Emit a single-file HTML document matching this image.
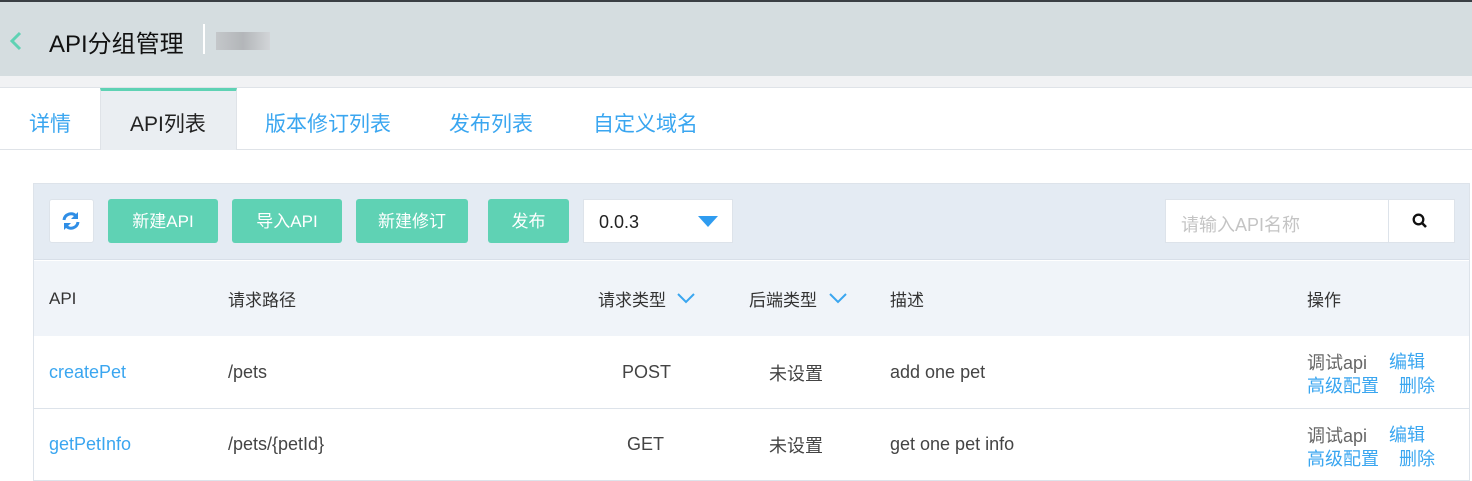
<!DOCTYPE html><html><head><meta charset="utf-8"><style>
*{margin:0;padding:0;box-sizing:border-box}
body{width:1472px;height:481px;overflow:hidden;background:#fff;font-family:"Liberation Sans","Noto Sans CJK SC",sans-serif;position:relative;color:#333}
.a{position:absolute}
.btn{position:absolute;top:199px;height:44px;background:#5fd2b4;color:#fff;border-radius:3px;font-size:17px;text-align:center;line-height:46px}
.th{position:absolute;top:288px;font-size:17px;color:#333}
.td{position:absolute;font-size:18px;color:#444}
.blue,.td.blue{color:#3aa6f0}
.g{color:#666!important}
</style></head><body>
<div class="a" style="left:0;top:0;width:1472px;height:2px;background:#3a3f44"></div>
<div class="a" style="left:0;top:2px;width:1472px;height:74px;background:#d5dde0"></div>
<svg class="a" style="left:9px;top:31px" width="14" height="20"><path d="M11 2 L3 10 L11 18" stroke="#5fd2b4" stroke-width="3" fill="none"/></svg>
<div class="a" style="left:49px;top:24px;font-size:24px;color:#111">API分组管理</div>
<div class="a" style="left:203px;top:24px;width:2px;height:30px;background:#fff"></div>
<div class="a" style="left:216px;top:32px;width:54px;height:18px;background:linear-gradient(90deg,#c4c7ca 0,#b3b6b9 50%,#d2d5d8 100%)"></div>
<div class="a" style="left:0;top:76px;width:1472px;height:11px;background:#f1f2f4"></div>
<div class="a" style="left:0;top:87px;width:1472px;height:1px;background:#dfe3e8"></div>
<div class="a" style="left:0;top:149px;width:1472px;height:1px;background:#dfe3e8"></div>
<div class="a" style="left:100px;top:88px;width:137px;height:62px;background:#eaeef2;border-top:3px solid #5fd2b4;border-left:1px solid #dfe3e8;border-right:1px solid #dfe3e8"></div>
<div class="a blue" style="left:29px;top:108px;font-size:21px">详情</div>
<div class="a" style="left:130px;top:108px;font-size:21px;color:#222">API列表</div>
<div class="a blue" style="left:265px;top:108px;font-size:21px">版本修订列表</div>
<div class="a blue" style="left:449px;top:108px;font-size:21px">发布列表</div>
<div class="a blue" style="left:593px;top:108px;font-size:21px">自定义域名</div>
<div class="a" style="left:33px;top:183px;width:1437px;height:298px;border:1px solid #dde3ea;background:#fff"></div>
<div class="a" style="left:34px;top:184px;width:1435px;height:76px;background:#e4ebf3;border-bottom:1px solid #d8dfe8"></div>
<div class="a" style="left:34px;top:261px;width:1435px;height:75px;background:#f0f4f9"></div>
<div class="a" style="left:34px;top:408px;width:1435px;height:1px;background:#dde3ea"></div>
<div class="a" style="left:49px;top:199px;width:45px;height:44px;background:#fff;border:1px solid #dde3ea;border-radius:3px"></div>
<svg class="a" style="left:61px;top:211px" width="20" height="20" viewBox="0 0 20 20"><path d="M3 9 A7 7 0 0 1 15 5" stroke="#2f8ee6" stroke-width="3" fill="none"/><path d="M17 1 L17 8 L10 8Z" fill="#2f8ee6"/><path d="M17 11 A7 7 0 0 1 5 15" stroke="#2f8ee6" stroke-width="3" fill="none"/><path d="M3 19 L3 12 L10 12Z" fill="#2f8ee6"/></svg>
<div class="btn" style="left:108px;width:110px">新建API</div>
<div class="btn" style="left:232px;width:110px">导入API</div>
<div class="btn" style="left:356px;width:112px">新建修订</div>
<div class="btn" style="left:488px;width:81px">发布</div>
<div class="a" style="left:583px;top:199px;width:150px;height:44px;background:#fff;border:1px solid #dde3ea"></div>
<div class="a" style="left:599px;top:212px;font-size:18px;color:#222">0.0.3</div>
<svg class="a" style="left:698px;top:216px" width="20" height="12"><path d="M0 0 L20 0 L10 11Z" fill="#2f9cf0"/></svg>
<div class="a" style="left:1165px;top:199px;width:290px;height:44px;background:#fff;border:1px solid #dde3ea"></div>
<div class="a" style="left:1388px;top:199px;width:1px;height:44px;background:#dde3ea"></div>
<div class="a" style="left:1181px;top:211px;font-size:18px;color:#c4c4c4">请输入API名称</div>
<svg class="a" style="left:1412px;top:213px" width="16" height="16"><circle cx="6.5" cy="6.5" r="4.8" stroke="#111" stroke-width="2.3" fill="none"/><path d="M10 10 L14 14" stroke="#111" stroke-width="2.6"/></svg>
<div class="th" style="left:49px;top:289px">API</div>
<div class="th" style="left:228px;top:286px">请求路径</div>
<div class="th" style="left:598px;top:286px">请求类型</div>
<svg class="a" style="left:677px;top:293px" width="18" height="11"><path d="M1 1 L9 9 L17 1" stroke="#3aa6f0" stroke-width="2" fill="none"/></svg>
<div class="th" style="left:749px;top:286px">后端类型</div>
<svg class="a" style="left:829px;top:293px" width="18" height="11"><path d="M1 1 L9 9 L17 1" stroke="#3aa6f0" stroke-width="2" fill="none"/></svg>
<div class="th" style="left:890px;top:286px">描述</div>
<div class="th" style="left:1307px;top:286px">操作</div>
<div class="td blue" style="left:49px;top:362px">createPet</div>
<div class="td" style="left:228px;top:362px">/pets</div>
<div class="td" style="left:622px;top:362px">POST</div>
<div class="td" style="left:769px;top:360px">未设置</div>
<div class="td" style="left:890px;top:362px">add one pet</div>
<div class="td g" style="left:1307px;top:349px">调试api</div>
<div class="td blue" style="left:1389px;top:348px">编辑</div>
<div class="td blue" style="left:1307px;top:372px">高级配置</div>
<div class="td blue" style="left:1399px;top:372px">删除</div>
<div class="td blue" style="left:49px;top:434px">getPetInfo</div>
<div class="td" style="left:228px;top:434px">/pets/{petId}</div>
<div class="td" style="left:627px;top:434px">GET</div>
<div class="td" style="left:769px;top:432px">未设置</div>
<div class="td" style="left:890px;top:434px">get one pet info</div>
<div class="td g" style="left:1307px;top:422px">调试api</div>
<div class="td blue" style="left:1389px;top:421px">编辑</div>
<div class="td blue" style="left:1307px;top:445px">高级配置</div>
<div class="td blue" style="left:1399px;top:445px">删除</div>
</body></html>
